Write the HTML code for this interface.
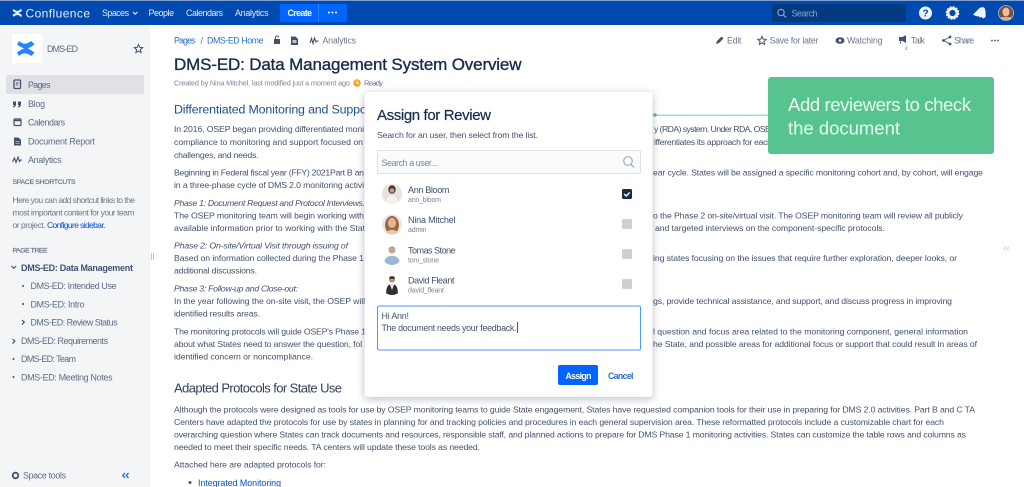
<!DOCTYPE html>
<html><head><meta charset="utf-8"><style>
html,body{margin:0;padding:0;background:#fff}
body{width:1024px;height:487px;overflow:hidden}
svg{display:block;filter:blur(.35px)}
text{font-family:"Liberation Sans",sans-serif}
.b text{font-size:8.7px;fill:#42526e}
.n text{font-size:8.9px;fill:#e3ebf8}
.s text{font-size:8.9px;fill:#5a6b85}
.t text{font-size:8.5px;fill:#6b778c}
.a text{font-size:7px;fill:#7a869a}
</style></head><body>
<svg width="1024" height="487" viewBox="0 0 1024 487" xmlns="http://www.w3.org/2000/svg">
<defs>
<filter id="sh" x="-10%" y="-10%" width="120%" height="120%"><feDropShadow dx="0" dy="2" stdDeviation="4" flood-color="#091e42" flood-opacity=".28"/></filter>
<clipPath id="c1"><circle cx="392" cy="194" r="10"/></clipPath>
<clipPath id="c2"><circle cx="392" cy="224.500" r="10"/></clipPath>
<clipPath id="c3"><circle cx="392" cy="255" r="10"/></clipPath>
<clipPath id="c4"><circle cx="392" cy="285" r="10"/></clipPath>
<clipPath id="c5"><circle cx="1006" cy="13" r="7.500"/></clipPath>
</defs>
<rect width="1024" height="487" fill="#fff"/>
<!-- top nav -->
<rect width="1024" height="25" fill="#0049b0"/>
<rect width="1024" height="1" fill="#7f9fce"/>
<path d="M13.500 9c3 2.500 5 2.500 7.500-.3l1 2c-1.500 1.300-2.800 1.800-3.600 2.200 1 .4 2.200 1.100 3.600 2.300l-1 2c-2.500-2.800-4.500-2.800-7.500-.3l-1-2c1.500-1.200 2.600-1.600 3.600-2-1-.4-2.100-1-3.600-2z" fill="#e8eef8"/>
<text x="25.500" y="17.500" font-size="12" fill="#eaf0fa" textLength="64.500">Confluence</text>
<g class="n"><text x="102" y="16" textLength="27">Spaces</text><text x="148.500" y="16" textLength="25.500">People</text><text x="186" y="16" textLength="37">Calendars</text><text x="235" y="16" textLength="33.500">Analytics</text></g>
<path d="M133 12l2.200 2.200 2.200-2.200" stroke="#e3ebf8" stroke-width="1.200" fill="none"/>
<rect x="280" y="4" width="67" height="18" rx="2" fill="#0065ff"/>
<rect x="318" y="4" width="1" height="18" fill="#2f80ff"/>
<text x="287.500" y="16" font-size="8.800" font-weight="bold" fill="#fff" textLength="24.500">Create</text>
<circle cx="329" cy="12.500" r="1" fill="#fff"/><circle cx="332.500" cy="12.500" r="1" fill="#fff"/><circle cx="336" cy="12.500" r="1" fill="#fff"/>
<rect x="772" y="4" width="134" height="18" rx="2" fill="#03397f"/>
<circle cx="781" cy="12.500" r="3.200" fill="none" stroke="#8ea6cb" stroke-width="1.100"/><path d="M783.500 15l2.500 2.500" stroke="#8ea6cb" stroke-width="1.200"/>
<text x="791.500" y="16.500" font-size="8.800" fill="#8ea6cb" textLength="26">Search</text>
<circle cx="925.500" cy="13" r="6.500" fill="#eef3fb"/>
<text x="925.500" y="16.500" font-size="10" font-weight="bold" fill="#0049b0" text-anchor="middle">?</text>
<circle cx="952.500" cy="13" r="4.500" fill="none" stroke="#eef3fb" stroke-width="2.800"/>
<circle cx="952.500" cy="13" r="6" fill="none" stroke="#eef3fb" stroke-width="1.600" stroke-dasharray="2 1.140"/>
<path d="M973 14.500l6-6c2-1.500 4.500-1.500 5.500-.5 1 1.500 1.500 5 1 9l-2 1.500c-1-.5-1.500-1-2-1.500l-2 .5-1-1.500-1 .5c-1.500-.5-3-1-4.500-2z" fill="#eef3fb"/>
<g clip-path="url(#c5)"><rect x="998" y="5" width="16" height="16" fill="#77513f"/><ellipse cx="1006" cy="12" rx="3.500" ry="4.500" fill="#e8bda3"/><rect x="1001" y="17" width="10" height="5" fill="#d9a98f"/></g>
<circle cx="1006" cy="13" r="7.500" fill="none" stroke="#dfe8f5" stroke-width=".6"/>
<!-- sidebar -->
<rect y="25" width="150" height="462" fill="#f4f5f7"/>
<rect x="12" y="34" width="30" height="29" fill="#fff"/>
<path d="M19 41c4 3.500 7 3.500 12.500 0l3 3.500c-3 2.200-5 3-6.500 4 1.500.8 3.500 2 6.500 4l-3 3.500c-5.500-3.500-8.500-3.500-12.500 0l-2-3.500c2.500-2 5-3 7-4-2-1-4.500-2-7-4z" fill="#2684ff"/>
<text x="47" y="52" font-size="8.800" fill="#5e6c84" textLength="31">DMS-ED</text>
<path d="M138.500 44.500l1.200 2.800 3 .3-2.300 2 .7 3-2.600-1.600-2.600 1.600.7-3-2.300-2 3-.3z" fill="none" stroke="#42526e" stroke-width="1"/>
<rect x="6" y="75" width="138" height="19" rx="2" fill="#dfe1e6"/>
<rect x="14" y="80" width="6.500" height="8.500" rx="1" fill="none" stroke="#42526e" stroke-width="1.300"/><path d="M15.800 83h3M15.800 85h2" stroke="#42526e"/>
<path d="M13 101.500h3v3c0 1.500-1 2.500-2.500 3l-.5-1c.8-.3 1-.8 1-1.500h-1zM18 101.500h3v3c0 1.500-1 2.500-2.500 3l-.5-1c.8-.3 1-.8 1-1.500h-1z" fill="#42526e"/>
<rect x="14" y="119" width="7" height="6.500" rx="1" fill="none" stroke="#42526e" stroke-width="1.200"/><path d="M14 120.500h7" stroke="#42526e" stroke-width="1.500"/>
<path d="M14 137.500h4.500l2.500 2.500v5.500h-7z" fill="#42526e"/><path d="M15.500 141.500h4M15.500 143.500h4" stroke="#f4f5f7" stroke-width=".6"/>
<path d="M12.500 162l2-4 1.500 4.500 2-5.500 1.500 4.500 1-1.500h1.500" fill="none" stroke="#42526e" stroke-width="1.100"/>
<g class="s"><text x="28" y="88" textLength="22.500">Pages</text><text x="28" y="107" textLength="17">Blog</text><text x="28" y="125.500" textLength="37">Calendars</text><text x="28" y="144.500" textLength="67">Document Report</text><text x="28" y="163" textLength="33.500">Analytics</text></g>
<text x="12.500" y="184" font-size="6.800" fill="#5e6c84" stroke="#5e6c84" stroke-width=".15" textLength="63">SPACE SHORTCUTS</text>
<g class="t"><text x="12.500" y="203" textLength="122.500">Here you can add shortcut links to the</text><text x="12.500" y="215.500" textLength="122">most important content for your team</text><text x="12.500" y="228" textLength="33">or project.</text></g>
<text x="47" y="228" font-size="8.500" fill="#0052cc" textLength="58.500">Configure sidebar.</text>
<text x="12.500" y="252.500" font-size="6.800" fill="#5e6c84" stroke="#5e6c84" stroke-width=".15" textLength="35">PAGE TREE</text>
<path d="M11.500 266l2.300 2.300 2.300-2.300" fill="none" stroke="#42526e" stroke-width="1.200"/>
<text x="21" y="271" font-size="9" font-weight="bold" fill="#42526e" textLength="112">DMS-ED: Data Management</text>
<g class="s"><text x="30.500" y="289" textLength="86">DMS-ED: Intended Use</text><text x="30.500" y="307.500" textLength="54">DMS-ED: Intro</text><text x="30.500" y="325.500" textLength="87">DMS-ED: Review Status</text><text x="21" y="344" textLength="87">DMS-ED: Requirements</text><text x="21" y="362" textLength="55">DMS-ED: Team</text><text x="21" y="380.500" textLength="91.500">DMS-ED: Meeting Notes</text></g>
<circle cx="23" cy="286" r="1" fill="#42526e"/><circle cx="23" cy="304" r="1" fill="#42526e"/><circle cx="13.500" cy="359" r="1" fill="#42526e"/><circle cx="13.500" cy="377" r="1" fill="#42526e"/>
<path d="M22 320l2.300 2.300-2.300 2.300M12.500 339l2.300 2.300-2.300 2.300" fill="none" stroke="#42526e" stroke-width="1.200"/>
<circle cx="15.500" cy="475.500" r="2.800" fill="none" stroke="#42526e" stroke-width="1.800"/>
<text x="23" y="478.500" font-size="8.900" fill="#5e6c84" textLength="43">Space tools</text>
<path d="M125 473l-2.300 2.500 2.300 2.500M128.500 473l-2.300 2.500 2.300 2.500" fill="none" stroke="#2a6fd6" stroke-width="1.300"/>
<rect x="151" y="253" width="1" height="7" fill="#c1c7d0"/><rect x="153" y="253" width="1" height="7" fill="#c1c7d0"/>
<!-- page header -->
<text x="174" y="43.500" font-size="8.800" fill="#2f6fc4" textLength="21.500">Pages</text>
<text x="200.500" y="43.500" font-size="8.800" fill="#5e6c84">/</text>
<text x="207" y="43.500" font-size="8.800" fill="#2f6fc4" textLength="56.500">DMS-ED Home</text>
<rect x="274" y="39" width="6" height="5" fill="#42526e"/><path d="M275.500 39v-1.500a1.500 1.500 0 013 0" fill="none" stroke="#42526e"/>
<path d="M291 36.500h4.500l2.500 2.500v6h-7z" fill="#42526e"/><rect x="292.500" y="40" width="4" height="3" fill="#f4f5f7" opacity=".7"/>
<path d="M310 43l1.500-4.500 1.500 5 1.500-5.500 1.500 4 1-1h1.500" fill="none" stroke="#42526e" stroke-width="1.100"/>
<text x="322.500" y="43.500" font-size="8.800" fill="#6b778c" textLength="33.500">Analytics</text>
<path d="M716 44l1-3 4.500-4.500 2 2-4.500 4.500z" fill="#42526e"/>
<text x="727" y="43.500" font-size="8.800" fill="#6b778c" textLength="14.500">Edit</text>
<path d="M762 36.300l1.200 2.800 3 .3-2.300 2 .7 3-2.600-1.600-2.600 1.600.7-3-2.300-2 3-.3z" fill="none" stroke="#42526e" stroke-width="1"/>
<text x="769.500" y="43.500" font-size="8.800" fill="#6b778c" textLength="49">Save for later</text>
<ellipse cx="840" cy="40.500" rx="4.500" ry="3.300" fill="#42526e"/><circle cx="840" cy="40.500" r="1.300" fill="#fff"/>
<text x="847" y="43.500" font-size="8.800" fill="#6b778c" textLength="35.500">Watching</text>
<path d="M899 37h3.500l3.500-2v8l-3.500-2H899z" fill="#42526e"/><path d="M900.500 41.500v2" stroke="#42526e" stroke-width="1.200"/>
<text x="905" y="49.500" font-size="4.800" fill="#42526e">2</text>
<text x="911" y="43.500" font-size="8.800" fill="#6b778c" textLength="14">Talk</text>
<circle cx="943.500" cy="40.500" r="1.400" fill="#42526e"/><circle cx="950" cy="37" r="1.400" fill="#42526e"/><circle cx="950" cy="44" r="1.400" fill="#42526e"/><path d="M950 37l-6.500 3.500 6.500 3.500" fill="none" stroke="#42526e" stroke-width=".8"/>
<text x="954" y="43.500" font-size="8.800" fill="#6b778c" textLength="20">Share</text>
<circle cx="992" cy="40.500" r=".9" fill="#42526e"/><circle cx="995" cy="40.500" r=".9" fill="#42526e"/><circle cx="998" cy="40.500" r=".9" fill="#42526e"/>
<text x="174" y="70" font-size="17" fill="#172b4d" textLength="347.500" stroke="#172b4d" stroke-width=".35">DMS-ED: Data Management System Overview</text>
<text x="174" y="85.500" font-size="7.300" fill="#7a869a" textLength="176">Created by Nina Mitchel, last modified just a moment ago</text>
<circle cx="357" cy="83" r="3.800" fill="#f5a623"/><path d="M357 80.500v2.700h2" stroke="#fff" stroke-width=".8" fill="none"/>
<text x="364" y="85.500" font-size="7.600" fill="#6b778c" textLength="19">Ready</text>
<!-- body -->
<text x="174" y="113.500" font-size="12.400" fill="#1f4e8c" textLength="200">Differentiated Monitoring and Support</text>
<g class="b">
<text x="174" y="132" textLength="190">In 2016, OSEP began providing differentiated moni</text>
<text x="174" y="145" textLength="189">compliance to monitoring and support focused on</text>
<text x="174" y="158" textLength="84.500">challenges, and needs.</text>
<text x="174" y="175.500" textLength="190">Beginning in Federal fiscal year (FFY) 2021Part B an</text>
<text x="174" y="188" textLength="190">in a three-phase cycle of DMS 2.0 monitoring activi</text>
<text x="174" y="206" textLength="191" font-style="italic">Phase 1: Document Request and Protocol Interviews.</text>
<text x="174" y="218.500" textLength="190">The OSEP monitoring team will begin working with</text>
<text x="174" y="231" textLength="191">available information prior to working with the Stat</text>
<text x="174" y="248.500" textLength="174" font-style="italic">Phase 2: On-site/Virtual Visit through issuing of</text>
<text x="174" y="261" textLength="190">Based on information collected during the Phase 1</text>
<text x="174" y="273.500" textLength="83">additional discussions.</text>
<text x="174" y="291.500" textLength="124" font-style="italic">Phase 3: Follow-up and Close-out:</text>
<text x="174" y="304" textLength="191">In the year following the on-site visit, the OSEP will</text>
<text x="174" y="316.500" textLength="86">identified results areas.</text>
<text x="174" y="334.500" textLength="192">The monitoring protocols will guide OSEP's Phase 1</text>
<text x="174" y="347" textLength="188">about what States need to answer the question, fol</text>
<text x="174" y="359.500" textLength="139">identified concern or noncompliance.</text>
<text x="654" y="132" textLength="122">y (RDA) system. Under RDA, OSEP</text>
<text x="654" y="145" textLength="118">ifferentiates its approach for each</text>
<text x="653" y="175.500" textLength="330">ear cycle. States will be assigned a specific monitoring cohort and, by cohort, will engage</text>
<text x="653" y="218.500" textLength="310">o the Phase 2 on-site/virtual visit. The OSEP monitoring team will review all publicly</text>
<text x="655" y="231" textLength="230">and targeted interviews on the component-specific protocols.</text>
<text x="653" y="261" textLength="304">ing states focusing on the issues that require further exploration, deeper looks, or</text>
<text x="653" y="304" textLength="299">gs, provide technical assistance, and support, and discuss progress in improving</text>
<text x="653" y="334.500" textLength="315">l question and focus area related to the monitoring component, general information</text>
<text x="653" y="347" textLength="324">he State, and possible areas for additional focus or support that could result in areas of</text>
<text x="174" y="412.500" textLength="801">Although the protocols were designed as tools for use by OSEP monitoring teams to guide State engagement, States have requested companion tools for their use in preparing for DMS 2.0 activities. Part B and C TA</text>
<text x="174" y="425" textLength="770">Centers have adapted the protocols for use by states in planning for and tracking policies and procedures in each general supervision area. These reformatted protocols include a customizable chart for each</text>
<text x="174" y="437.500" textLength="792">overarching question where States can track documents and resources, responsible staff, and planned actions to prepare for DMS Phase 1 monitoring activities. States can customize the table rows and columns as</text>
<text x="174" y="450" textLength="306">needed to meet their specific needs. TA centers will update these tools as needed.</text>
<text x="174" y="467.500" textLength="152">Attached here are adapted protocols for:</text>
</g>
<text x="174" y="392.500" font-size="13" fill="#33415c" textLength="168">Adapted Protocols for State Use</text>
<circle cx="190" cy="482.500" r="1.500" fill="#42526e"/>
<text x="198" y="486" font-size="8.900" fill="#0052cc" textLength="83" text-decoration="underline">Integrated Monitoring</text>
<path d="M1006 246.500l-2 2 2 2M1009 246.500l-2 2 2 2" fill="none" stroke="#c1c7d0" stroke-width=".8"/>
<!-- connector + tooltip -->
<rect x="653" y="114.500" width="115" height="1.500" fill="#a3dfc1"/>
<circle cx="655" cy="115" r="1.700" fill="#57c48f"/>
<rect x="768" y="77" width="226" height="77" rx="3" fill="#57c48f"/>
<text x="788" y="111" font-size="18.500" fill="#eafaf2" textLength="183">Add reviewers to check</text>
<text x="788" y="134.500" font-size="18.500" fill="#eafaf2" textLength="112">the document</text>
<!-- modal -->
<rect x="364.500" y="92" width="288" height="305" rx="3" fill="#fff" filter="url(#sh)"/>
<text x="377" y="120" font-size="15" fill="#172b4d" textLength="114" stroke="#172b4d" stroke-width=".2">Assign for Review</text>
<text x="377" y="138" font-size="8.700" fill="#42526e" textLength="161">Search for an user, then select from the list.</text>
<rect x="377.500" y="150.500" width="263" height="23" rx="1.500" fill="#fafbfc" stroke="#dfe1e6"/>
<text x="381.500" y="166" font-size="8.900" fill="#7a869a" textLength="56">Search a user...</text>
<circle cx="628" cy="161" r="4.300" fill="none" stroke="#a5adba" stroke-width="1.200"/><path d="M631 164.500l3 3" stroke="#a5adba" stroke-width="1.400"/>
<!-- avatars -->
<circle cx="392" cy="194" r="10" fill="#e4e3e1"/>
<g clip-path="url(#c1)"><ellipse cx="392" cy="189.500" rx="3.700" ry="4.300" fill="#4a3530"/><circle cx="392" cy="190.500" r="2.300" fill="#c49a85"/><path d="M386 204c0-6 3-9 6-9s6 3 6 9z" fill="#f4f2ef"/></g>
<circle cx="392" cy="224.500" r="10" fill="#e8e6e4"/>
<g clip-path="url(#c2)"><ellipse cx="392" cy="225" rx="7" ry="9" fill="#a4683f"/><ellipse cx="392" cy="223" rx="4" ry="5" fill="#e3b59a"/><path d="M385 235c1-4 4-5 7-5s6 1 7 5z" fill="#e8c7b4"/></g>
<circle cx="392" cy="255" r="10" fill="#fff"/>
<g clip-path="url(#c3)"><circle cx="392" cy="250" r="3.500" fill="#c8a48e"/><path d="M388.500 249c0-3 7-3 7 0l-1-1.500h-5z" fill="#888"/><path d="M384 265c0-7 3-9 8-9s8 2 8 9z" fill="#9db8d6"/></g>
<circle cx="392" cy="285" r="10" fill="#fff"/>
<g clip-path="url(#c4)"><circle cx="392" cy="279.500" r="3" fill="#b58a6e"/><path d="M389 278.500c0-3 6-3 6 0z" fill="#222"/><path d="M386 295c0-8 2-11 6-11s6 3 6 11z" fill="#2f2f31"/><path d="M389.500 284h5l-2.500 6z" fill="#ddd"/></g>
<g font-size="9.100" fill="#42526e"><text x="408" y="193" textLength="41.500">Ann Bloom</text><text x="408" y="223" textLength="47.500">Nina Mitchel</text><text x="408" y="253.500" textLength="47.500">Tomas Stone</text><text x="408" y="283.500" textLength="46.500">David Fleant</text></g>
<g class="a"><text x="408" y="202" textLength="33">ann_bloom</text><text x="408" y="232" textLength="18.500">admin</text><text x="408" y="262.500" textLength="31">tom_stone</text><text x="408" y="292.500" textLength="36">david_fleant</text></g>
<rect x="622" y="189" width="10" height="10" rx="1.500" fill="#172b4d"/><path d="M624.200 194l2 2 3.500-3.500" fill="none" stroke="#fff" stroke-width="1.400"/>
<rect x="622" y="219" width="10" height="10" rx="1.500" fill="#cfcfcf"/>
<rect x="622" y="249" width="10" height="10" rx="1.500" fill="#cfcfcf"/>
<rect x="622" y="279" width="10" height="10" rx="1.500" fill="#cfcfcf"/>
<rect x="377.500" y="306" width="263" height="44" rx="1.500" fill="#fff" stroke="#4c9aff" stroke-width="1"/>
<text x="381.500" y="319" font-size="8.900" fill="#42526e" textLength="27.500">Hi Ann!</text>
<text x="381.500" y="331" font-size="8.900" fill="#42526e" textLength="135">The document needs your feedback.</text>
<rect x="517" y="322" width=".8" height="11" fill="#172b4d"/>
<rect x="558" y="365" width="40" height="20" rx="2" fill="#0065ff"/>
<text x="565.500" y="379" font-size="8.800" font-weight="bold" fill="#fff" textLength="26">Assign</text>
<text x="608" y="379" font-size="8.800" font-weight="bold" fill="#2f6fc4" textLength="25.500">Cancel</text>
</svg>
</body></html>
